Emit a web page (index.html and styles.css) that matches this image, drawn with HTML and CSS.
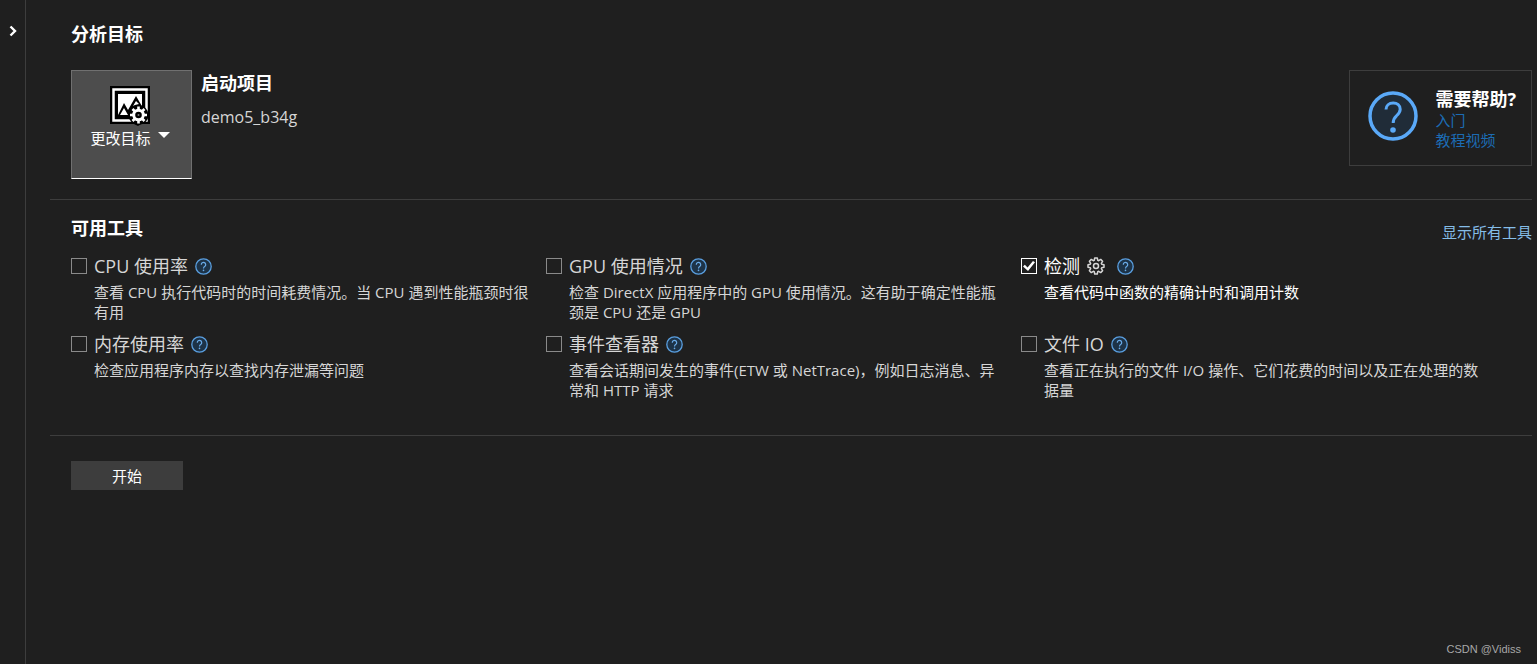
FILE: index.html
```html
<!DOCTYPE html>
<html lang="zh-CN">
<head>
<meta charset="utf-8">
<title>分析目标</title>
<link rel="stylesheet" href="styles.css">
</head>
<body>
<svg class="defs" aria-hidden="true">
  <symbol id="help" viewBox="0 0 17 17">
    <circle cx="8.5" cy="8.5" r="7.7" fill="#1d3348" stroke="#5a9fe0" stroke-width="1.3"/>
    <path d="M6.3 6.7a2.2 2.2 0 1 1 3.6 1.6c-.9.7-1.4 1.1-1.4 2.1" fill="none" stroke="#6aabe8" stroke-width="1.2"/>
    <circle cx="8.5" cy="12.4" r=".8" fill="#6aabe8"/>
  </symbol>
</svg>
<div class="app">
  <aside class="rail">
    <button class="expand" aria-label="展开">
      <svg width="8" height="12" viewBox="0 0 8 12"><path d="M1.5 1.5 6 6 1.5 10.500" fill="none" stroke="#fff" stroke-width="2.400"/></svg>
    </button>
  </aside>
  <main class="main">
    <section class="section target">
      <h2>分析目标</h2>
      <div class="target-row">
        <button class="change">
          <svg width="40" height="40" viewBox="0 0 40 40">
            <path d="M0 0h40v38H31l-3 2-4-2H0z" fill="#000"/>
            <path d="M3.500 3.500h33v31h-33z" fill="none" stroke="#fff" stroke-width="2.500"/>
            <path d="M8 8h24v22H8z" fill="#fff"/>
            <path d="M7.500 30 14 17l4 7 8-14 7 12v10H8z" fill="#000"/>
            <path d="m10 29 4-7 4 7zM23 20l3-5 3 3-4 1z" fill="#fff"/>
            <circle cx="28.500" cy="29" r="10" fill="#000"/>
            <path d="M28.500 20.500v17M20 29h17M22.500 23l12 12M34.500 23l-12 12" stroke="#fff" stroke-width="2.600"/>
            <circle cx="28.500" cy="29" r="4.800" fill="#000" stroke="#fff" stroke-width="3"/>
            <circle cx="28.500" cy="29" r="1" fill="#777"/>
          </svg>
          <span class="change-label">更改目标
            <svg width="12" height="6" viewBox="0 0 12 6"><path d="M0 0h12L6 6z" fill="#fff"/></svg>
          </span>
        </button>
        <div class="project">
          <h2>启动项目</h2>
          <p>demo5_b34g</p>
        </div>
        <div class="helpbox">
          <svg width="50" height="50" viewBox="0 0 50 50">
            <circle cx="25" cy="25" r="23" fill="#202c38" stroke="#5aa9f8" stroke-width="3.500"/>
            <path d="M18 18.500c0-4 3-6.500 7.200-6.500 4 0 7 2.500 7 6.300 0 3.200-1.700 4.700-3.700 6.500-2.200 1.900-3.300 3.300-3.300 7.200" fill="none" stroke="#5aa9f8" stroke-width="3"/>
            <circle cx="25" cy="39" r="2.800" fill="#5aa9f8"/>
          </svg>
          <div class="help-text">
            <h2>需要帮助?</h2>
            <a href="#">入门</a>
            <a href="#">教程视频</a>
          </div>
        </div>
      </div>
    </section>
    <section class="section tools">
      <header class="tools-head">
        <h2>可用工具</h2>
        <a href="#">显示所有工具</a>
      </header>
      <div class="grid">
        <div class="tool">
          <div class="tool-title"><input type="checkbox" id="t1"><label for="t1">CPU 使用率</label><svg class="q"><use href="#help"/></svg></div>
          <p>查看 CPU 执行代码时的时间耗费情况。当 CPU 遇到性能瓶颈时很有用</p>
        </div>
        <div class="tool">
          <div class="tool-title"><input type="checkbox" id="t2"><label for="t2">GPU 使用情况</label><svg class="q"><use href="#help"/></svg></div>
          <p>检查 DirectX 应用程序中的 GPU 使用情况。这有助于确定性能瓶颈是 CPU 还是 GPU</p>
        </div>
        <div class="tool on">
          <div class="tool-title"><input type="checkbox" id="t3" checked><label for="t3">检测</label>
            <button class="gear" aria-label="设置">
              <svg width="18" height="18" viewBox="0 0 18 18" fill="none" stroke="#d6d6d6" stroke-width="1.500" stroke-linejoin="round">
                <path d="M7.700 1h2.600l.4 2.300 1 .4 2-1.300 1.900 1.900-1.300 2 .4 1 2.300.4v2.600l-2.300.4-.4 1 1.300 2-1.900 1.900-2-1.300-1 .4-.4 2.300H7.700l-.4-2.300-1-.4-2 1.300-1.900-1.900 1.300-2-.4-1L1 10.300V7.700l2.300-.4.4-1-1.300-2 1.900-1.900 2 1.300 1-.4z"/>
                <circle cx="9" cy="9" r="2.500"/>
              </svg>
            </button>
            <svg class="q"><use href="#help"/></svg></div>
          <p>查看代码中函数的精确计时和调用计数</p>
        </div>
        <div class="tool">
          <div class="tool-title"><input type="checkbox" id="t4"><label for="t4">内存使用率</label><svg class="q"><use href="#help"/></svg></div>
          <p>检查应用程序内存以查找内存泄漏等问题</p>
        </div>
        <div class="tool">
          <div class="tool-title"><input type="checkbox" id="t5"><label for="t5">事件查看器</label><svg class="q"><use href="#help"/></svg></div>
          <p>查看会话期间发生的事件(ETW 或 NetTrace)，例如日志消息、异常和 HTTP 请求</p>
        </div>
        <div class="tool">
          <div class="tool-title"><input type="checkbox" id="t6"><label for="t6">文件 IO</label><svg class="q"><use href="#help"/></svg></div>
          <p>查看正在执行的文件 I/O 操作、它们花费的时间以及正在处理的数据量</p>
        </div>
      </div>
    </section>
    <section class="section actions">
      <button class="start">开始</button>
    </section>
    <footer class="credit">CSDN @Vidiss</footer>
  </main>
</div>
</body>
</html>
```

FILE: styles.css
```css
* { box-sizing: border-box; }

body {
  margin: 0;
  background: #1f1f1f;
  color: #d6d6d6;
  font: 15px/20px "Open Sans", "Noto Sans CJK SC", sans-serif;
}

h2, p { margin: 0; }

h2 {
  color: #fff;
  font-size: 18px;
  line-height: 24px;
  font-weight: 700;
}

a { text-decoration: none; }

button {
  font: inherit;
  color: #fff;
  cursor: pointer;
}

.defs {
  position: absolute;
  width: 0;
  height: 0;
}

.app {
  display: flex;
  min-height: 100vh;
}

.rail {
  flex: none;
  width: 26px;
  padding: 25px 0 0 9px;
  border-right: 1px solid #3d3d3d;
}

.expand {
  display: block;
  padding: 0;
  border: 0;
  background: none;
}

.expand svg { display: block; }

.main {
  flex: 1;
  display: flex;
  flex-direction: column;
  padding: 0 5px 0 24px;
}

.section { padding-left: 21px; }

.target {
  padding-top: 22px;
  padding-bottom: 20px;
  border-bottom: 1px solid #3d3d3d;
}

.target-row {
  display: flex;
  align-items: flex-start;
  margin-top: 24px;
}

.change {
  display: flex;
  flex-direction: column;
  align-items: center;
  width: 121px;
  height: 109px;
  padding: 15px 3px 0 0;
  background: #4d4d4d;
  border: 1px solid #707070;
  border-bottom-color: #fff;
}

.change-label {
  display: flex;
  gap: 7px;
  line-height: 24px;
}

.change-label svg { margin-top: 6px; }

.project {
  flex: 1;
  padding: 1px 0 0 9px;
}

.project p {
  margin-top: 12px;
  font-size: 16px;
}

.helpbox {
  display: flex;
  gap: 17px;
  padding: 17px 15px 15px 18px;
  border: 1px solid #3d3d3d;
}

.helpbox svg { margin-top: 3px; }

.help-text h2 { line-height: 22px; }

.help-text a {
  display: block;
  color: #1c6cb4;
}

.tools {
  padding-top: 16px;
  padding-bottom: 35px;
  border-bottom: 1px solid #3d3d3d;
}

.tools-head {
  display: flex;
  justify-content: space-between;
}

.tools-head a {
  padding-top: 6px;
  color: #85bde8;
}

.grid {
  display: grid;
  grid-template-columns: repeat(3, 1fr);
  row-gap: 10px;
  margin-top: 12px;
  padding-right: 36px;
}

.tool { padding-right: 14px; }

.tool-title {
  display: flex;
  align-items: center;
  height: 24px;
  font-size: 18px;
}

.tool-title input {
  appearance: none;
  width: 16px;
  height: 16px;
  margin: 0 7px 0 0;
  border: 1px solid #8a8a8a;
}

.tool-title input:checked {
  display: grid;
  place-items: center;
  border-color: #fff;
}

.tool-title input:checked::before {
  content: "";
  width: 12px;
  height: 10px;
  background: #fff;
  clip-path: polygon(0 55%, 15% 38%, 38% 65%, 83% 0, 100% 12%, 42% 100%);
}

.q {
  width: 17px;
  height: 17px;
  margin-left: 7px;
}

.gear {
  height: 18px;
  margin: 0 5px 0 7px;
  padding: 0;
  border: 0;
  background: none;
}

.gear svg { display: block; }

.tool p {
  margin-top: 4px;
  padding-left: 23px;
}

.on, .on p { color: #fff; }

.actions { padding-top: 25px; }

.start {
  width: 112px;
  height: 29px;
  padding: 0;
  border: 0;
  background: #3d3d3d;
}

.credit {
  margin-top: auto;
  padding: 0 11px 5px 0;
  color: #a8a8a8;
  font-family: "Liberation Sans", sans-serif;
  font-size: 11px;
  text-align: right;
}
```
